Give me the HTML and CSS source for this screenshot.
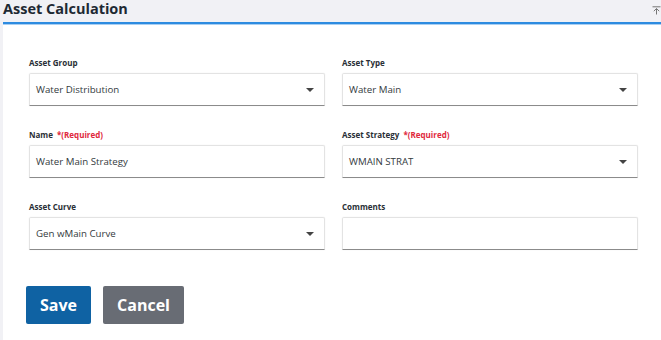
FILE: index.html
```html
<!DOCTYPE html>
<html>
<head>
<meta charset="utf-8">
<link rel="stylesheet" href="styles.css">
</head>
<body>
<div class="page">
  <div class="header">
    <h1 class="title">Asset Calculation</h1>
    <svg class="collapse" width="9" height="9" viewBox="0 0 9 9"><path d="M0.5 0.8H8.5" stroke="#777" stroke-width="1"/><path d="M4.5 8.5V2.6M1.8 5.2L4.5 2.5L7.2 5.2" stroke="#777" stroke-width="1" fill="none"/></svg>
  </div>
  <div class="panel">
    <div class="grid">
      <div class="field">
        <label class="label">Asset Group</label>
        <div class="box"><span class="value">Water Distribution</span><span class="caret"></span></div>
      </div>
      <div class="field">
        <label class="label">Asset Type</label>
        <div class="box"><span class="value">Water Main</span><span class="caret"></span></div>
      </div>
      <div class="field">
        <label class="label">Name <span class="req">*(Required)</span></label>
        <div class="box"><span class="value">Water Main Strategy</span></div>
      </div>
      <div class="field">
        <label class="label">Asset Strategy <span class="req">*(Required)</span></label>
        <div class="box"><span class="value">WMAIN STRAT</span><span class="caret"></span></div>
      </div>
      <div class="field">
        <label class="label">Asset Curve</label>
        <div class="box"><span class="value">Gen wMain Curve</span><span class="caret"></span></div>
      </div>
      <div class="field">
        <label class="label">Comments</label>
        <div class="box"></div>
      </div>
    </div>
    <div class="actions">
      <button class="btn save">Save</button>
      <button class="btn cancel">Cancel</button>
    </div>
  </div>
</div>
</body>
</html>
```
FILE: styles.css
```css
html, body {
  margin: 0;
  padding: 0;
  background: #f1f1f5;
  font-family: "Open Sans", "Liberation Sans", sans-serif;
  height: 340px;
  overflow: hidden;
}
.page {
  padding-left: 3px;
}
.header {
  height: 22px;
  display: flex;
  align-items: flex-start;
  justify-content: space-between;
  border-bottom: 2px solid #2d8be0;
  box-shadow: 0 1px 0 #a9cff2;
}
.title {
  margin: 0;
  font-size: 14.5px;
  font-weight: 700;
  color: #1e2933;
  line-height: 17px;
}
.collapse {
  margin-top: 6px;
  margin-right: 0;
}
.panel {
  background: #fff;
  margin-top: 1px;
  height: 320px;
  padding: 32px 23px 0 23px;
  box-sizing: border-box;
}
.grid {
  display: grid;
  grid-template-columns: 296px 296px;
  column-gap: 17px;
  row-gap: 23px;
  margin-left: 3px;
}
.field {
  display: flex;
  flex-direction: column;
}
.label {
  font-size: 8px;
  font-weight: 700;
  color: #2a2f36;
  line-height: 11px;
  margin: 0 0 5px 0;
}
.req {
  color: #e0283c;
  margin-left: 2px;
}
.box {
  height: 33px;
  box-sizing: border-box;
  border: 1px solid #e3e3e3;
  border-bottom: 1px solid #8b8b8b;
  border-radius: 2px 2px 0 0;
  box-shadow: 0 0 2px rgba(0,0,0,0.06);
  display: flex;
  align-items: center;
  justify-content: space-between;
  padding: 0 10px 0 6px;
}
.value {
  font-size: 9.7px;
  color: #333a40;
}
.caret {
  width: 0;
  height: 0;
  border-left: 4px solid transparent;
  border-right: 4px solid transparent;
  border-top: 4px solid #444;
}
.actions {
  display: flex;
  gap: 12px;
  margin-top: 36px;
}
.btn {
  height: 38px;
  border: none;
  border-radius: 2px;
  color: #fff;
  font-family: "Open Sans", "Liberation Sans", sans-serif;
  font-weight: 700;
  font-size: 16px;
  padding: 0;
}
.save {
  width: 65px;
  background: #0f62a3;
}
.cancel {
  width: 81px;
  background: #686c74;
}
```
